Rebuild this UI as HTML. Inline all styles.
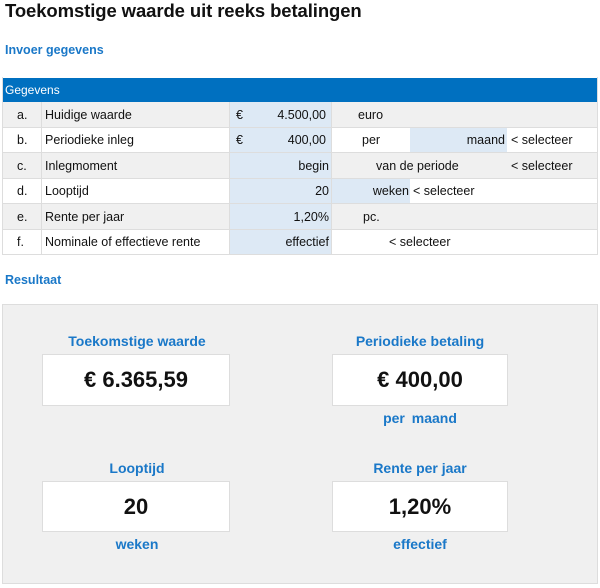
<!DOCTYPE html>
<html><head><meta charset="utf-8"><style>
*{margin:0;padding:0;box-sizing:border-box}
body{width:600px;height:588px;background:#fff;font-family:"Liberation Sans",sans-serif;position:relative;overflow:hidden;color:#111}
.a{position:absolute;white-space:nowrap}
h1{position:absolute;left:5px;top:0px;font-size:18.5px;font-weight:bold;color:#111;letter-spacing:-0.1px}
.sec{position:absolute;left:5px;font-size:12.5px;font-weight:bold;color:#1a78c8}
.panel{position:absolute;left:2px;top:304px;width:596px;height:280px;background:#f0f0f0;border:1px solid #ddd}
.t{position:absolute;font-size:14px;font-weight:bold;color:#1a78c8;text-align:center}
.box{position:absolute;background:#fff;border:1px solid #ddd;font-size:22px;font-weight:bold;text-align:center;line-height:50px;color:#111}
</style></head><body>
<h1>Toekomstige waarde uit reeks betalingen</h1>
<div class="sec" style="top:43px">Invoer gegevens</div>
<div class="a" style="left:2px;top:78px;width:595px;height:24px;background:#0070c0;color:#fff;font-size:12px;line-height:24px;padding-left:3px">Gegevens</div>

<div class="a" style="left:2px;top:102px;width:595px;height:25px;background:#f0f0f0"></div>
<div class="a" style="left:2px;top:152px;width:595px;height:26px;background:#f0f0f0"></div>
<div class="a" style="left:2px;top:203px;width:595px;height:26px;background:#f0f0f0"></div>
<div class="a" style="left:230px;top:102px;width:101px;height:152px;background:#dde9f5"></div>
<div class="a" style="left:410px;top:127px;width:97px;height:25px;background:#dde9f5"></div>
<div class="a" style="left:331px;top:178px;width:79px;height:25px;background:#dde9f5"></div>
<div class="a" style="left:2px;top:77px;width:596px;height:178px;border:1px solid #ddd;border-top:none"></div>
<div class="a" style="left:2px;top:127px;width:595px;border-top:1px solid #ddd"></div>
<div class="a" style="left:2px;top:152px;width:595px;border-top:1px solid #ddd"></div>
<div class="a" style="left:2px;top:178px;width:595px;border-top:1px solid #ddd"></div>
<div class="a" style="left:2px;top:203px;width:595px;border-top:1px solid #ddd"></div>
<div class="a" style="left:2px;top:229px;width:595px;border-top:1px solid #ddd"></div>
<div class="a" style="left:2px;top:254px;width:595px;border-top:1px solid #ddd"></div>
<div class="a" style="left:41px;top:102px;height:152px;border-left:1px solid #ddd"></div>
<div class="a" style="left:229px;top:102px;height:152px;border-left:1px solid #ddd"></div>
<div class="a" style="left:331px;top:102px;height:152px;border-left:1px solid #ddd"></div>

<div style="position:absolute;left:0;top:1px;font-size:12.5px;line-height:25px">
<div class="a" style="left:17px;top:102px">a.</div>
<div class="a" style="left:17px;top:127px">b.</div>
<div class="a" style="left:17px;top:153px">c.</div>
<div class="a" style="left:17px;top:178px">d.</div>
<div class="a" style="left:17px;top:204px">e.</div>
<div class="a" style="left:17px;top:229px">f.</div>
<div class="a" style="left:45px;top:102px">Huidige waarde</div>
<div class="a" style="left:45px;top:127px">Periodieke inleg</div>
<div class="a" style="left:45px;top:153px">Inlegmoment</div>
<div class="a" style="left:45px;top:178px">Looptijd</div>
<div class="a" style="left:45px;top:204px">Rente per jaar</div>
<div class="a" style="left:45px;top:229px">Nominale of effectieve rente</div>
<div class="a" style="left:236px;top:102px">€</div>
<div class="a" style="left:236px;top:127px">€</div>
<div class="a" style="left:230px;width:96px;text-align:right;top:102px">4.500,00</div>
<div class="a" style="left:230px;width:96px;text-align:right;top:127px">400,00</div>
<div class="a" style="left:230px;width:99px;text-align:right;top:153px">begin</div>
<div class="a" style="left:230px;width:99px;text-align:right;top:178px">20</div>
<div class="a" style="left:230px;width:99px;text-align:right;top:204px">1,20%</div>
<div class="a" style="left:230px;width:99px;text-align:right;top:229px">effectief</div>
<div class="a" style="left:358px;top:102px">euro</div>
<div class="a" style="left:362px;top:127px">per</div>
<div class="a" style="left:410px;width:95px;text-align:right;top:127px">maand</div>
<div class="a" style="left:511px;top:127px">&lt; selecteer</div>
<div class="a" style="left:376px;top:153px">van de periode</div>
<div class="a" style="left:511px;top:153px">&lt; selecteer</div>
<div class="a" style="left:331px;width:78px;text-align:right;top:178px">weken</div>
<div class="a" style="left:413px;top:178px">&lt; selecteer</div>
<div class="a" style="left:363px;top:204px">pc.</div>
<div class="a" style="left:389px;top:229px">&lt; selecteer</div>
</div>

<div class="sec" style="top:273px">Resultaat</div>
<div class="panel"></div>
<div class="t" style="left:37px;width:200px;top:333px">Toekomstige waarde</div>
<div class="box" style="left:42px;top:354px;width:188px;height:52px">€ 6.365,59</div>
<div class="t" style="left:318px;width:204px;top:333px">Periodieke betaling</div>
<div class="box" style="left:332px;top:354px;width:176px;height:52px">€ 400,00</div>
<div class="t" style="left:318px;width:204px;top:410px;word-spacing:3px">per maand</div>
<div class="t" style="left:37px;width:200px;top:460px">Looptijd</div>
<div class="box" style="left:42px;top:481px;width:188px;height:51px">20</div>
<div class="t" style="left:37px;width:200px;top:536px">weken</div>
<div class="t" style="left:318px;width:204px;top:460px">Rente per jaar</div>
<div class="box" style="left:332px;top:481px;width:176px;height:51px">1,20%</div>
<div class="t" style="left:318px;width:204px;top:536px">effectief</div>
</body></html>
